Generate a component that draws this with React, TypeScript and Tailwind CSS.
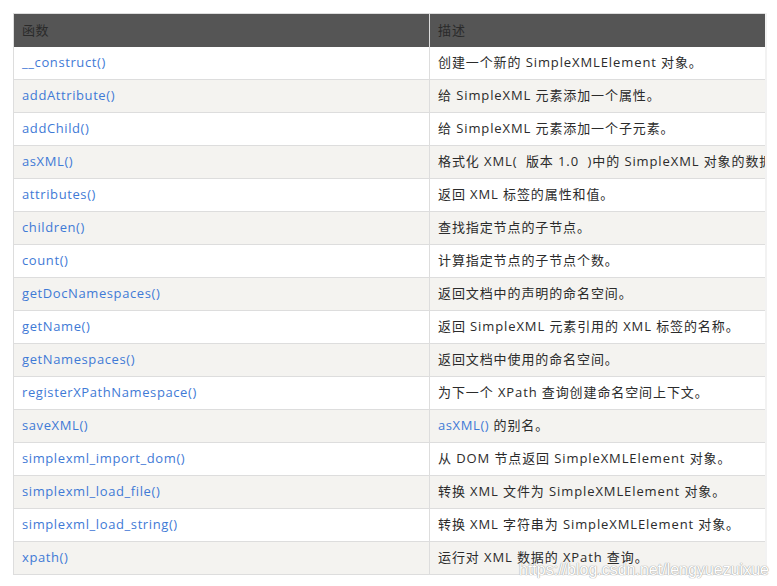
const rows: { fn: string; desc: React.ReactNode }[] = [
  { fn: "__construct()", desc: "创建一个新的 SimpleXMLElement 对象。" },
  { fn: "addAttribute()", desc: "给 SimpleXML 元素添加一个属性。" },
  { fn: "addChild()", desc: "给 SimpleXML 元素添加一个子元素。" },
  { fn: "asXML()", desc: "格式化 XML(  版本 1.0  )中的 SimpleXML 对象的数据。" },
  { fn: "attributes()", desc: "返回 XML 标签的属性和值。" },
  { fn: "children()", desc: "查找指定节点的子节点。" },
  { fn: "count()", desc: "计算指定节点的子节点个数。" },
  { fn: "getDocNamespaces()", desc: "返回文档中的声明的命名空间。" },
  { fn: "getName()", desc: "返回 SimpleXML 元素引用的 XML 标签的名称。" },
  { fn: "getNamespaces()", desc: "返回文档中使用的命名空间。" },
  { fn: "registerXPathNamespace()", desc: "为下一个 XPath 查询创建命名空间上下文。" },
  {
    fn: "saveXML()",
    desc: (
      <>
        <a className="text-[#3f7ad6] tracking-[0.6px]">asXML()</a> 的别名。
      </>
    ),
  },
  { fn: "simplexml_import_dom()", desc: "从 DOM 节点返回 SimpleXMLElement 对象。" },
  { fn: "simplexml_load_file()", desc: "转换 XML 文件为 SimpleXMLElement 对象。" },
  { fn: "simplexml_load_string()", desc: "转换 XML 字符串为 SimpleXMLElement 对象。" },
  { fn: "xpath()", desc: "运行对 XML 数据的 XPath 查询。" },
];

export default function App() {
  return (
    <div
      className="relative w-[777px] h-[586px] bg-white pt-[13px] pl-[13px] text-[13px] tracking-[0.6px] text-[#2b2b2b]"
      style={{ fontFamily: '"Open Sans", "Noto Sans CJK SC", sans-serif' }}
    >
      {/* table, clipped on the right like the original page */}
      <div className="w-[754px] overflow-hidden border-r-2 border-[#f2f2f2]">
        <table className="w-[860px] border-collapse table-fixed">
          <colgroup>
            <col className="w-[416px]" />
            <col />
          </colgroup>
          <thead>
            <tr className="h-[33px] bg-[#555555] border-t border-[#dddddd]">
              <th className="text-left font-normal pl-2 border-l border-[#dddddd] text-[#2a2a2a]">函数</th>
              <th className="text-left font-normal pl-2 border-l border-[#dddddd] text-[#2a2a2a] tracking-[0.9px]">描述</th>
            </tr>
          </thead>
          <tbody>
            {rows.map((r, i) => (
              <tr
                key={r.fn}
                className={`h-[33px] border-b border-[#dddddd] ${i % 2 === 1 ? "bg-[#f4f3f0]" : "bg-white"}`}
              >
                <td className="pl-2 border-l border-[#dddddd] whitespace-pre">
                  <a className="text-[#3f7ad6]">{r.fn}</a>
                </td>
                <td className="pl-2 border-l border-[#dddddd] whitespace-pre tracking-[0.9px]">{r.desc}</td>
              </tr>
            ))}
          </tbody>
        </table>
      </div>

      {/* blog watermark */}
      <div
        className="absolute left-[519px] top-[558px] text-[16px] tracking-normal text-white whitespace-nowrap"
        style={{
          fontFamily: '"Liberation Sans", Arial, sans-serif',
          textShadow: "0 0 1px #9a9a9a, 0 0 1px #9a9a9a",
        }}
      >
        https://blog.csdn.net/lengyuezuixue
      </div>
    </div>
  );
}
